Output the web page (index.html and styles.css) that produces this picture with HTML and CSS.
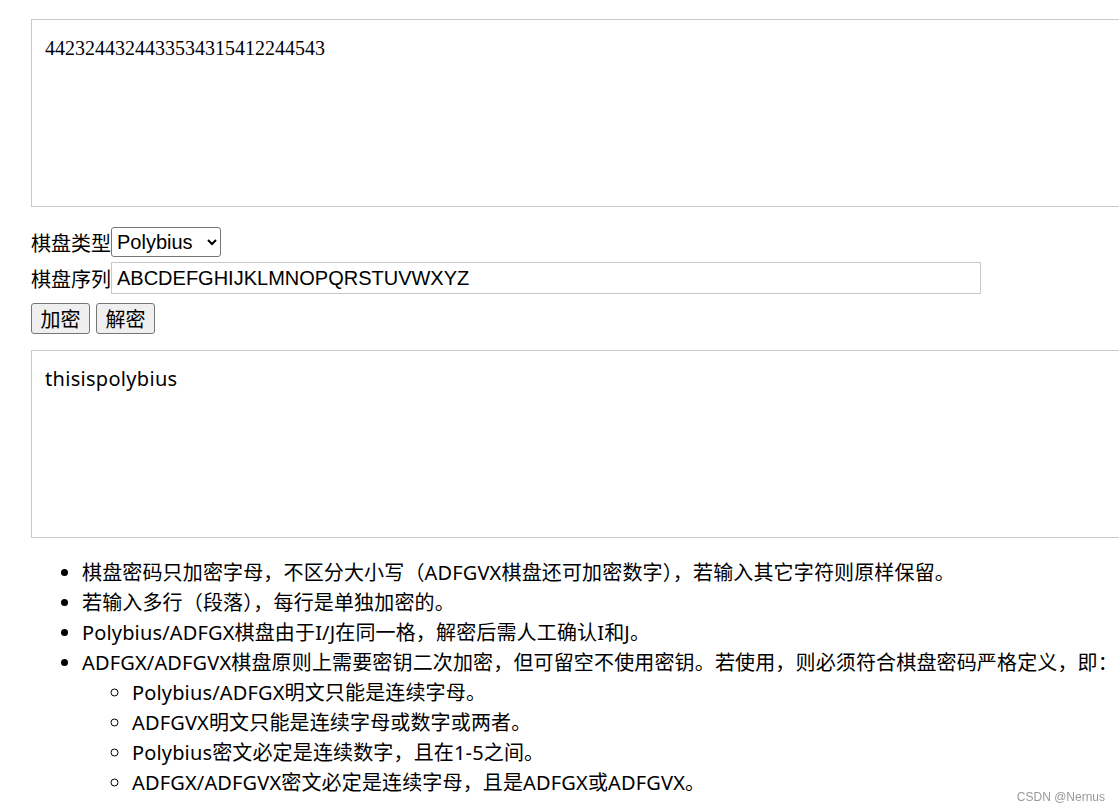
FILE: index.html
```html
<!DOCTYPE html>
<html lang="zh-CN">
<head>
<meta charset="UTF-8">
<meta name="viewport" content="width=device-width, initial-scale=1.0">
<title>棋盘密码</title>
<link rel="stylesheet" href="styles.css">
</head>
<body>
<div class="page">
  <textarea class="box box-cipher" id="cipher" readonly>4423244324433534315412244543</textarea>

  <div class="row row-type">
    <label for="board-type">棋盘类型</label><select id="board-type" class="sel">
      <option>Polybius</option>
      <option>ADFGX</option>
      <option>ADFGVX</option>
    </select>
  </div>
  <div class="row row-seq">
    <label for="board-seq">棋盘序列</label><input id="board-seq" class="seq" type="text" value="ABCDEFGHIJKLMNOPQRSTUVWXYZ">
  </div>
  <div class="row row-btns">
    <button class="btn">加密</button>
    <button class="btn">解密</button>
  </div>

  <textarea class="box box-plain" id="plain" readonly>thisispolybius</textarea>

  <ul class="notes">
    <li>棋盘密码只加密字母，不区分大小写（ADFGVX棋盘还可加密数字），若输入其它字符则原样保留。</li>
    <li>若输入多行（段落），每行是单独加密的。</li>
    <li>Polybius/ADFGX棋盘由于I/J在同一格，解密后需人工确认I和J。</li>
    <li>ADFGX/ADFGVX棋盘原则上需要密钥二次加密，但可留空不使用密钥。若使用，则必须符合棋盘密码严格定义，即：
      <ul>
        <li>Polybius/ADFGX明文只能是连续字母。</li>
        <li>ADFGVX明文只能是连续字母或数字或两者。</li>
        <li>Polybius密文必定是连续数字，且在1-5之间。</li>
        <li>ADFGX/ADFGVX密文必定是连续字母，且是ADFGX或ADFGVX。</li>
      </ul>
    </li>
  </ul>
</div>
<div class="mark">CSDN @Nernus</div>
</body>
</html>
```

FILE: styles.css
```css
html {
  overflow: hidden;
}
body {
  margin: 0;
  font-family: "Noto Sans", "Noto Sans CJK SC", sans-serif;
  font-size: 20px;
  color: #000;
  background: #fff;
}
.page {
  padding: 19px 0 0 31px;
}
/* text boxes run past the right edge of the window */
.box {
  display: block;
  box-sizing: border-box;
  width: 1200px;
  height: 188px;
  margin: 0;
  padding: 14px 13px;
  border: 1px solid #c8c8c8;
  resize: none;
  outline: none;
  background: #fff;
  color: #000;
}
.box-cipher {
  font-family: "Liberation Serif", "Noto Sans CJK SC", serif;
  font-size: 20px;
  line-height: 28px;
}
.box-plain {
  margin-top: 16px;
  padding-top: 13px;
  font-family: "Noto Sans", "Noto Sans CJK SC", sans-serif;
  font-size: 20px;
  line-height: 30px;
  letter-spacing: 0.3px;
}
.row {
  display: flex;
  align-items: center;
  font-family: "Liberation Sans", "Noto Sans CJK SC", sans-serif;
}
.row label {
  font-size: 20px;
}
.row-type {
  margin-top: 20px;
  height: 30px;
}
.row-seq {
  margin-top: 5px;
  height: 32px;
}
.row-btns {
  margin-top: 9px;
  gap: 6px;
  height: 31px;
}
.sel {
  box-sizing: border-box;
  width: 110px;
  height: 30px;
  font-family: "Liberation Sans", sans-serif;
  font-size: 20px;
  border: 1px solid #767676;
  border-radius: 3px;
  background: #fff;
  color: #000;
  padding: 0 1px;
}
.seq {
  box-sizing: border-box;
  width: 870px;
  height: 32px;
  margin: 0;
  padding: 0 5px;
  border: 1px solid #c8c8c8;
  font-family: "Liberation Sans", sans-serif;
  font-size: 20px;
  color: #000;
  outline: none;
}
.btn {
  box-sizing: border-box;
  width: 59px;
  height: 31px;
  padding: 0;
  font-family: "Noto Sans CJK SC", sans-serif;
  font-size: 20px;
  line-height: 1;
  background: #efefef;
  border: 1px solid #767676;
  border-radius: 3px;
  color: #000;
}
.notes {
  margin: 20px 0 0;
  padding-left: 51px;
  line-height: 30px;
  letter-spacing: 0.15px;
  white-space: nowrap;
}
.notes ul {
  margin: 0;
  padding-left: 50px;
  list-style-type: circle;
}
.mark {
  position: fixed;
  right: 14px;
  bottom: 7px;
  font-family: "Liberation Sans", sans-serif;
  font-size: 12px;
  color: #999;
}
```
